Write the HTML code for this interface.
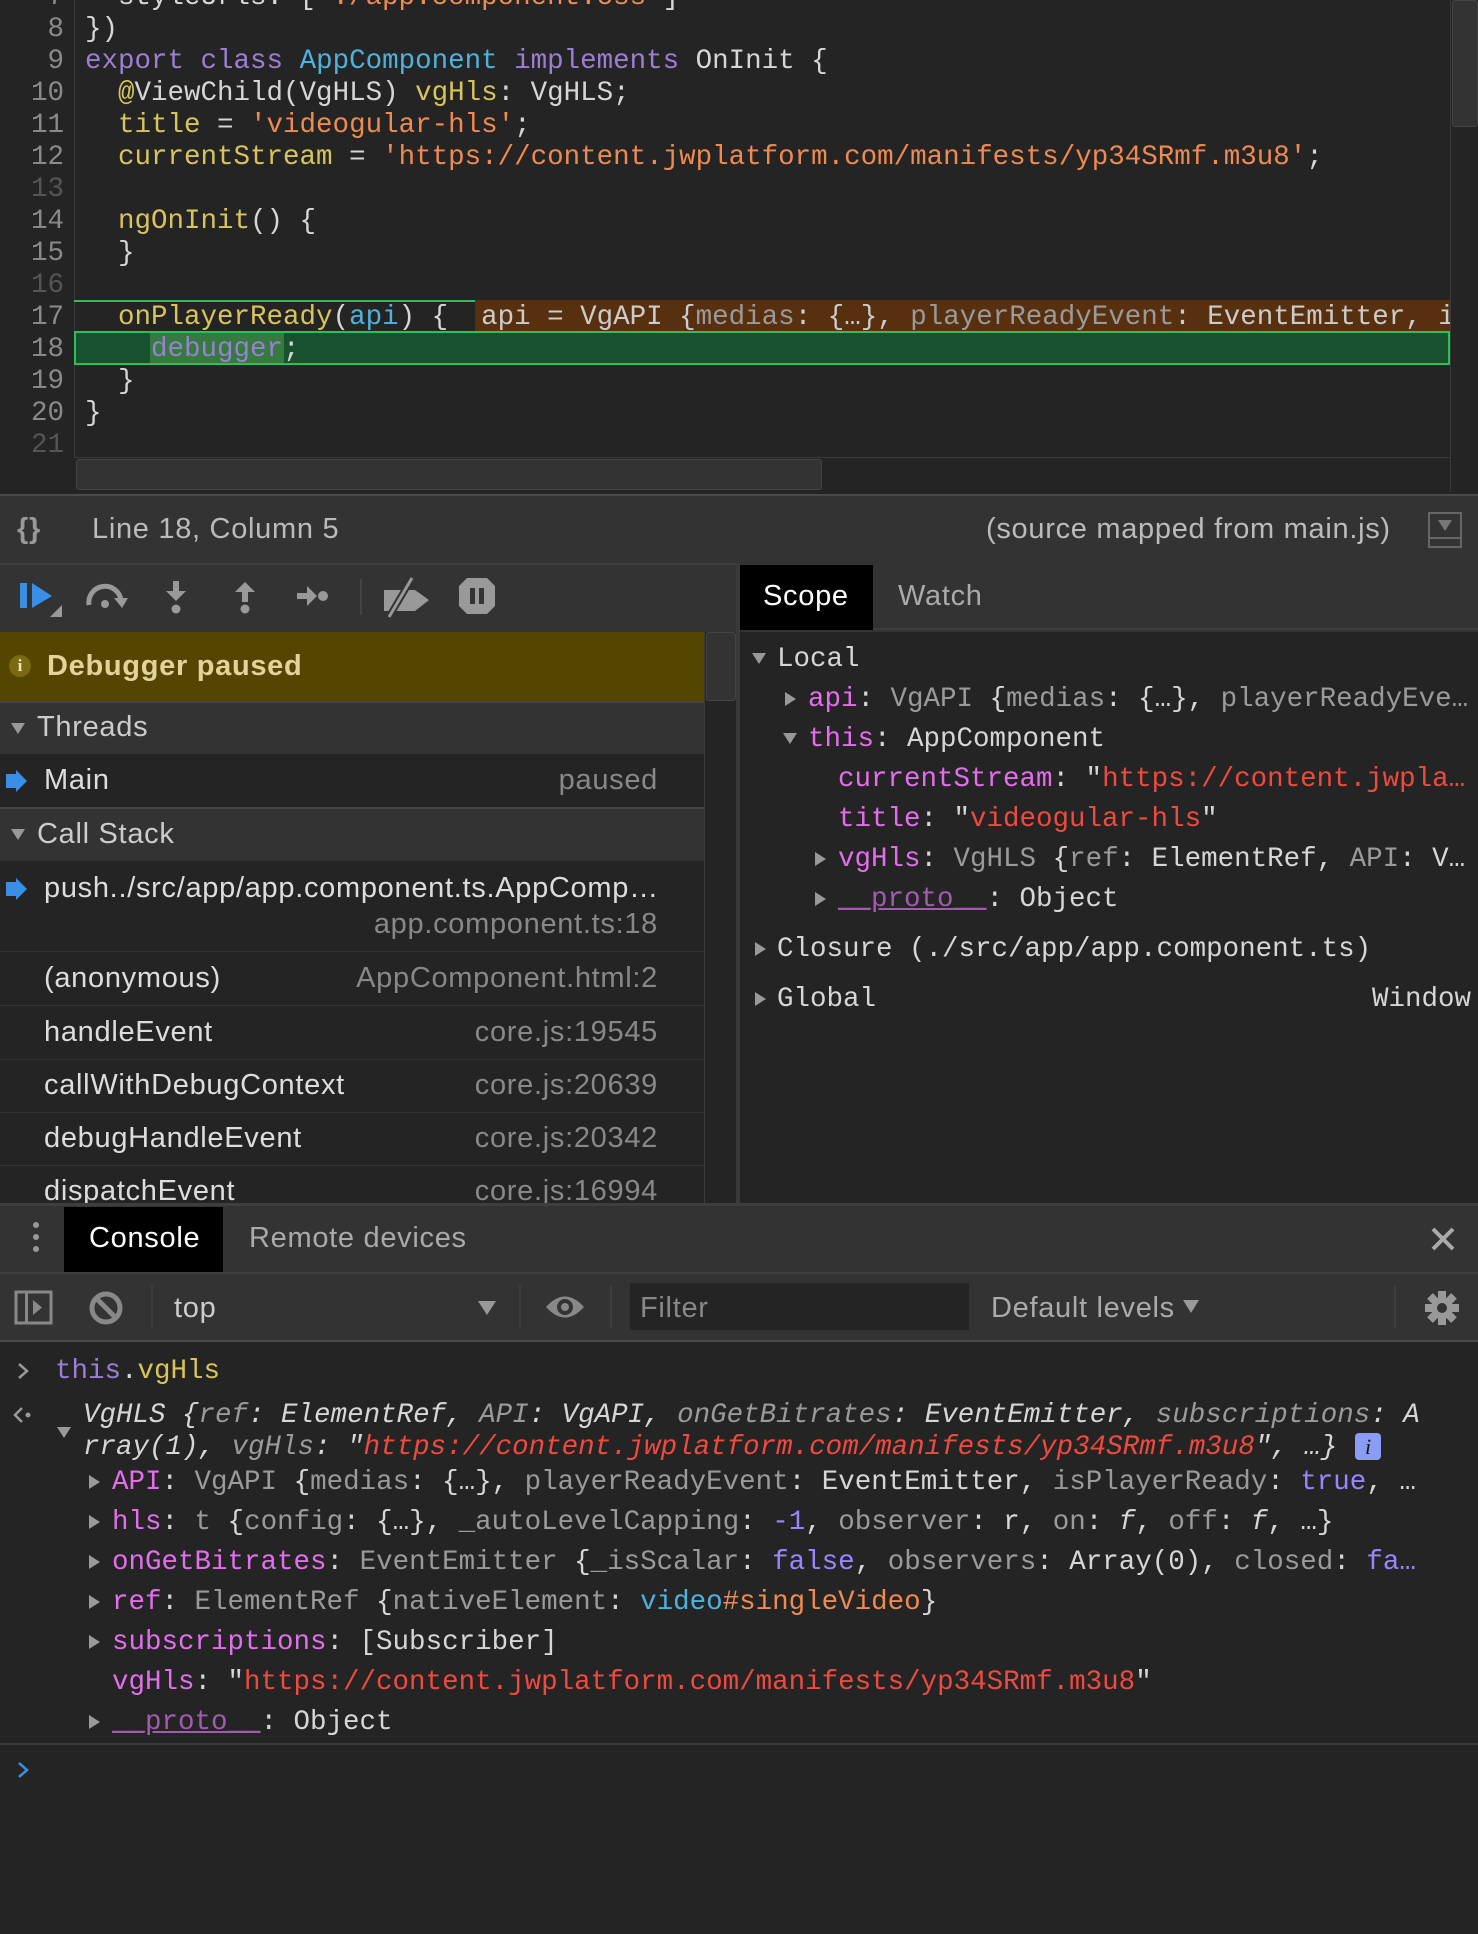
<!DOCTYPE html>
<html><head><meta charset="utf-8"><style>
*{margin:0;padding:0;box-sizing:border-box}
body{width:1478px;height:1934px;background:#242424;position:relative;overflow:hidden;font-family:"Liberation Sans",sans-serif;color:#d6d6d6}
.a{position:absolute;white-space:pre}
.m{font-family:"Liberation Mono",monospace;font-size:27.5px;line-height:32px;margin-top:3px}
.s{font-size:29px;line-height:32px;letter-spacing:0.7px}
.k{color:#9a7fd5}.b{color:#4eb2de}.y{color:#d8c55a}.o{color:#ef8a50}.w{color:#d6d6d6}
.g{color:#9a9a9a}.p{color:#e36eec}.r{color:#ee4a40}.v{color:#9b85ff}.pr{color:#a35bb0}
.ln{color:#8a8a8a;text-align:right;width:64px;left:0}
.dim{color:#555}
.tri{position:absolute;width:0;height:0}
.tr{border-top:7px solid transparent;border-bottom:7px solid transparent;border-left:11px solid #999}
.td{border-left:7px solid transparent;border-right:7px solid transparent;border-top:11px solid #999}
</style></head><body>

<!-- code editor -->
<div class="a" style="left:74px;top:0;width:1px;height:491px;background:#3a3a3a"></div>
<div class="a" style="left:74px;top:300px;width:1376px;height:2px;background:#2fbf58"></div>
<div class="a" style="left:475px;top:300px;width:1003px;height:31px;background:#573010"></div>
<div class="a" style="left:74px;top:331px;width:1376px;height:34px;background:#17512d;border:2px solid #2fbf58"></div>
<div class="a" style="left:150px;top:333px;width:134px;height:30px;background:#357a3e"></div>

<div class="a m ln" style="top:-21px">7</div>
<div class="a m" style="left:85px;top:-21px"><span class="w">  styleUrls: [</span><span class="o">'./app.component.css'</span><span class="w">]</span></div>
<div class="a m ln" style="top:11px">8</div><div class="a m w" style="left:85px;top:11px">})</div>
<div class="a m ln" style="top:43px">9</div><div class="a m" style="left:85px;top:43px"><span class="k">export class</span> <span class="b">AppComponent</span> <span class="k">implements</span> <span class="w">OnInit {</span></div>
<div class="a m ln" style="top:75px">10</div><div class="a m" style="left:85px;top:75px">  <span class="y">@</span><span class="w">ViewChild(VgHLS)</span> <span class="y">vgHls</span><span class="w">: VgHLS;</span></div>
<div class="a m ln" style="top:107px">11</div><div class="a m" style="left:85px;top:107px">  <span class="y">title</span><span class="w"> = </span><span class="o">'videogular-hls'</span><span class="w">;</span></div>
<div class="a m ln" style="top:139px">12</div><div class="a m" style="left:85px;top:139px">  <span class="y">currentStream</span><span class="w"> = </span><span class="o">'https://content.jwplatform.com/manifests/yp34SRmf.m3u8'</span><span class="w">;</span></div>
<div class="a m ln dim" style="top:171px">13</div>
<div class="a m ln" style="top:203px">14</div><div class="a m" style="left:85px;top:203px">  <span class="y">ngOnInit</span><span class="w">() {</span></div>
<div class="a m ln" style="top:235px">15</div><div class="a m w" style="left:85px;top:235px">  }</div>
<div class="a m ln dim" style="top:267px">16</div>
<div class="a m ln" style="top:299px">17</div><div class="a m" style="left:85px;top:299px">  <span class="y">onPlayerReady</span><span class="w">(</span><span class="b">api</span><span class="w">) {  </span><span style="color:#ccc">api = VgAPI {</span><span class="g">medias</span><span style="color:#ccc">: {…}, </span><span class="g">playerReadyEvent</span><span style="color:#ccc">: EventEmitter, is</span></div>
<div class="a m ln" style="top:331px">18</div><div class="a m" style="left:85px;top:331px">    <span class="k">debugger</span><span class="w">;</span></div>
<div class="a m ln" style="top:363px">19</div><div class="a m w" style="left:85px;top:363px">  }</div>
<div class="a m ln" style="top:395px">20</div><div class="a m w" style="left:85px;top:395px">}</div>
<div class="a m ln dim" style="top:427px">21</div>

<!-- scrollbars -->
<div class="a" style="left:74px;top:457px;width:1376px;height:34px;background:#242424;border-top:1px solid #3a3a3a"></div>
<div class="a" style="left:76px;top:459px;width:746px;height:31px;background:#333;border:1px solid #444;border-radius:3px"></div>
<div class="a" style="left:1450px;top:0;width:28px;height:491px;background:#242424;border-left:1px solid #3a3a3a"></div>
<div class="a" style="left:1452px;top:0;width:26px;height:127px;background:#333;border:1px solid #444;border-radius:3px"></div>

<!-- status bar -->
<div class="a" style="left:0;top:494px;width:1478px;height:69px;background:#333;border-top:2px solid #4a4a4a"></div>
<div class="a s" style="left:17px;top:513px;color:#999;font-weight:bold">{}</div>
<div class="a s" style="left:92px;top:513px;color:#bbb">Line 18, Column 5</div>
<div class="a s" style="left:986px;top:513px;color:#bbb">(source mapped from main.js)</div>
<div class="a" style="left:1428px;top:512px;width:34px;height:36px;border:2px solid #666"></div>
<div class="a" style="left:1428px;top:537px;width:34px;height:2px;background:#666"></div>
<div class="tri td" style="left:1438px;top:520px;border-top-color:#777"></div>

<!-- debugger toolbar -->
<div class="a" style="left:0;top:563px;width:1478px;height:69px;background:#333;border-top:2px solid #3e3e3e"></div>
<svg class="a" style="left:0;top:563px" width="740" height="69" viewBox="0 563 740 69">
<rect x="20" y="583" width="7" height="25" fill="#3b8ee6"/><path d="M32 583 L52 596 L32 608Z" fill="#3b8ee6"/><path d="M62 617 L62 605 L50 617Z" fill="#999"/>
<path d="M89 605 A16 16 0 0 1 121 600" stroke="#999" stroke-width="5" fill="none"/><path d="M114 598 L128 598 L122 608Z" fill="#999"/><circle cx="105" cy="604" r="4" fill="#999"/>
<rect x="173" y="581" width="6" height="12" fill="#999"/><path d="M166 591 L186 591 L176 601Z" fill="#999"/><circle cx="176" cy="609" r="4.5" fill="#999"/>
<rect x="242" y="590" width="6" height="12" fill="#999"/><path d="M235 592 L255 592 L245 582Z" fill="#999"/><circle cx="245" cy="609" r="4.5" fill="#999"/>
<rect x="297" y="593" width="12" height="6" fill="#999"/><path d="M307 586 L317 596 L307 606Z" fill="#999"/><circle cx="323" cy="596" r="5" fill="#999"/>
<rect x="360" y="579" width="2" height="36" fill="#444"/>
<path d="M384 590 L415 590 L429 600 L415 611 L384 611Z" fill="#999"/><path d="M389 617 L412 578" stroke="#333" stroke-width="7"/><path d="M389 617 L412 578" stroke="#999" stroke-width="3"/>
<path d="M467 578 L487 578 L495 586 L495 606 L487 614 L467 614 L459 606 L459 586Z" fill="#999"/><rect x="470" y="588" width="5" height="16" fill="#333"/><rect x="479" y="588" width="5" height="16" fill="#333"/>
</svg>

<!-- left pane -->
<div class="a" style="left:0;top:632px;width:704px;height:69px;background:#544500"></div>
<div class="a" style="left:9px;top:655px;width:22px;height:22px;border-radius:50%;background:#7a6a14;color:#f0e4a8;font:bold 17px 'Liberation Serif',serif;text-align:center;line-height:22px">i</div>
<div class="a s" style="left:47px;top:650px;color:#e0d49c;font-weight:bold">Debugger paused</div>
<div class="a" style="left:704px;top:632px;width:34px;height:571px;background:#242424;border-left:1px solid #3a3a3a"></div>
<div class="a" style="left:706px;top:632px;width:30px;height:69px;background:#333;border-radius:3px;border:1px solid #444"></div>
<div class="a" style="left:736px;top:563px;width:4px;height:640px;background:#3a3a3a"></div>

<div class="a" style="left:0;top:701px;width:704px;height:53px;background:#333;border-top:2px solid #444"></div>
<div class="tri td" style="left:11px;top:723px"></div>
<div class="a s" style="left:37px;top:711px;color:#ccc">Threads</div>
<div class="a" style="left:0;top:754px;width:704px;height:53px;background:#242424"></div>
<svg class="a" style="left:6px;top:770px" width="22" height="22"><path d="M0 4 L10 4 L10 0 L21 11 L10 22 L10 18 L0 18Z" fill="#3b8ee6"/></svg>
<div class="a s" style="left:44px;top:764px;color:#ddd">Main</div>
<div class="a s" style="left:400px;top:764px;width:258px;text-align:right;color:#888">paused</div>
<div class="a" style="left:0;top:807px;width:704px;height:54px;background:#333;border-top:2px solid #444"></div>
<div class="tri td" style="left:11px;top:829px"></div>
<div class="a s" style="left:37px;top:818px;color:#ccc">Call Stack</div>
<svg class="a" style="left:6px;top:878px" width="22" height="22"><path d="M0 4 L10 4 L10 0 L21 11 L10 22 L10 18 L0 18Z" fill="#3b8ee6"/></svg>
<div class="a s" style="left:44px;top:872px;color:#ddd">push../src/app/app.component.ts.AppComp…</div>
<div class="a s" style="left:300px;top:908px;width:358px;text-align:right;color:#888">app.component.ts:18</div>
<div class="a" style="left:0;top:951px;width:704px;height:1px;background:#333"></div>
<div class="a s" style="left:44px;top:962px;color:#ddd">(anonymous)</div><div class="a s" style="left:300px;top:962px;width:358px;text-align:right;color:#888">AppComponent.html:2</div>
<div class="a" style="left:0;top:1005px;width:704px;height:1px;background:#333"></div>
<div class="a s" style="left:44px;top:1016px;color:#ddd">handleEvent</div><div class="a s" style="left:300px;top:1016px;width:358px;text-align:right;color:#888">core.js:19545</div>
<div class="a" style="left:0;top:1059px;width:704px;height:1px;background:#333"></div>
<div class="a s" style="left:44px;top:1069px;color:#ddd">callWithDebugContext</div><div class="a s" style="left:300px;top:1069px;width:358px;text-align:right;color:#888">core.js:20639</div>
<div class="a" style="left:0;top:1112px;width:704px;height:1px;background:#333"></div>
<div class="a s" style="left:44px;top:1122px;color:#ddd">debugHandleEvent</div><div class="a s" style="left:300px;top:1122px;width:358px;text-align:right;color:#888">core.js:20342</div>
<div class="a" style="left:0;top:1165px;width:704px;height:1px;background:#333"></div>
<div class="a s" style="left:44px;top:1175px;color:#ddd">dispatchEvent</div><div class="a s" style="left:300px;top:1175px;width:358px;text-align:right;color:#888">core.js:16994</div>

<!-- right pane -->
<div class="a" style="left:740px;top:563px;width:738px;height:67px;background:#333;border-bottom:2px solid #3e3e3e"></div>
<div class="a" style="left:740px;top:565px;width:133px;height:65px;background:#000"></div>
<div class="a s" style="left:763px;top:580px;color:#fff">Scope</div>
<div class="a s" style="left:898px;top:580px;color:#aaa">Watch</div>
<div class="tri td" style="left:752px;top:653px"></div>
<div class="a m w" style="left:777px;top:641px">Local</div>
<div class="tri tr" style="left:785px;top:692px"></div>
<div class="a m" style="left:808px;top:681px"><span class="p">api</span><span class="w">: </span><span class="g">VgAPI </span><span class="w">{</span><span class="g">medias</span><span class="w">: {…}, </span><span class="g">playerReadyEve…</span></div>
<div class="tri td" style="left:783px;top:733px"></div>
<div class="a m" style="left:808px;top:721px"><span class="p">this</span><span class="w">: AppComponent</span></div>
<div class="a m" style="left:838px;top:761px"><span class="p">currentStream</span><span class="w">: "</span><span class="r">https://content.jwpla…</span></div>
<div class="a m" style="left:838px;top:801px"><span class="p">title</span><span class="w">: "</span><span class="r">videogular-hls</span><span class="w">"</span></div>
<div class="tri tr" style="left:815px;top:852px"></div>
<div class="a m" style="left:838px;top:841px"><span class="p">vgHls</span><span class="w">: </span><span class="g">VgHLS </span><span class="w">{</span><span class="g">ref</span><span class="w">: ElementRef, </span><span class="g">API</span><span class="w">: V…</span></div>
<div class="tri tr" style="left:815px;top:892px"></div>
<div class="a m" style="left:838px;top:881px"><span class="pr" style="text-decoration:underline">__proto__</span><span class="w">: Object</span></div>
<div class="tri tr" style="left:755px;top:942px"></div>
<div class="a m w" style="left:777px;top:931px">Closure (./src/app/app.component.ts)</div>
<div class="tri tr" style="left:755px;top:992px"></div>
<div class="a m w" style="left:777px;top:981px">Global</div>
<div class="a m w" style="left:1372px;top:981px">Window</div>

<!-- console drawer -->
<div class="a" style="left:0;top:1203px;width:1478px;height:69px;background:#333;border-top:3px solid #3e3e3e"></div>
<div class="a" style="left:33px;top:1222px;width:6px;height:6px;border-radius:50%;background:#999;box-shadow:0 12px 0 #999,0 24px 0 #999"></div>
<div class="a" style="left:64px;top:1207px;width:159px;height:65px;background:#000"></div>
<div class="a s" style="left:89px;top:1222px;color:#fff">Console</div>
<div class="a s" style="left:249px;top:1222px;color:#aaa">Remote devices</div>
<svg class="a" style="left:1430px;top:1226px" width="26" height="26"><path d="M3 3 L23 23 M23 3 L3 23" stroke="#aaa" stroke-width="4"/></svg>

<div class="a" style="left:0;top:1272px;width:1478px;height:70px;background:#333;border-top:2px solid #3e3e3e;border-bottom:2px solid #4a4a4a"></div>
<svg class="a" style="left:14px;top:1290px" width="40" height="36"><rect x="2" y="2" width="35" height="31" fill="none" stroke="#888" stroke-width="3"/><rect x="11" y="2" width="3" height="31" fill="#888"/><path d="M19 10 L28 17.5 L19 25Z" fill="#888"/></svg>
<svg class="a" style="left:88px;top:1290px" width="36" height="36"><circle cx="18" cy="18" r="14" fill="none" stroke="#888" stroke-width="5"/><path d="M8 8 L28 28" stroke="#888" stroke-width="5"/></svg>
<div class="a" style="left:151px;top:1286px;width:2px;height:42px;background:#3e3e3e"></div>
<div class="a s" style="left:174px;top:1292px;color:#ccc">top</div>
<div class="tri td" style="left:478px;top:1301px;border-left-width:9px;border-right-width:9px;border-top-width:14px"></div>
<div class="a" style="left:519px;top:1286px;width:2px;height:42px;background:#3e3e3e"></div>
<svg class="a" style="left:544px;top:1292px" width="42" height="30"><path d="M2 15 Q21 -6 40 15 Q21 36 2 15Z" fill="#888"/><circle cx="21" cy="15" r="8" fill="#333"/><circle cx="21" cy="15" r="4" fill="#888"/></svg>
<div class="a" style="left:610px;top:1286px;width:2px;height:42px;background:#3e3e3e"></div>
<div class="a" style="left:630px;top:1283px;width:339px;height:47px;background:#242424"></div>
<div class="a s" style="left:640px;top:1292px;color:#888">Filter</div>
<div class="a s" style="left:991px;top:1292px;color:#aaa">Default levels</div>
<div class="tri td" style="left:1183px;top:1300px;border-left-width:8px;border-right-width:8px;border-top-width:13px"></div>
<div class="a" style="left:1394px;top:1286px;width:2px;height:42px;background:#3e3e3e"></div>
<svg class="a" style="left:1424px;top:1290px" width="36" height="36" viewBox="0 0 36 36"><g fill="#999"><circle cx="18" cy="18" r="11"/><rect x="14" y="1" width="8" height="34"/><rect x="14" y="1" width="8" height="34" transform="rotate(45 18 18)"/><rect x="14" y="1" width="8" height="34" transform="rotate(90 18 18)"/><rect x="14" y="1" width="8" height="34" transform="rotate(135 18 18)"/></g><circle cx="18" cy="18" r="5" fill="#333"/></svg>

<!-- console output -->
<svg class="a" style="left:16px;top:1362px" width="16" height="18"><path d="M3 2 L11 9 L3 16" stroke="#999" stroke-width="2.5" fill="none"/></svg>
<div class="a m" style="left:55px;top:1353px"><span class="k">this</span><span class="w">.</span><span class="y">vgHls</span></div>
<svg class="a" style="left:12px;top:1406px" width="22" height="18"><path d="M10 2 L3 9 L10 16" stroke="#999" stroke-width="2.5" fill="none"/><circle cx="16" cy="9" r="2.5" fill="#999"/></svg>
<div class="tri td" style="left:57px;top:1427px"></div>
<div class="a m" style="left:83px;top:1397px;font-style:italic"><span class="w">VgHLS {</span><span class="g">ref</span><span class="w">: ElementRef, </span><span class="g">API</span><span class="w">: VgAPI, </span><span class="g">onGetBitrates</span><span class="w">: EventEmitter, </span><span class="g">subscriptions</span><span class="w">: A</span></div>
<div class="a m" style="left:83px;top:1429px;font-style:italic"><span class="w">rray(1), </span><span class="g">vgHls</span><span class="w">: "</span><span class="r">https://content.jwplatform.com/manifests/yp34SRmf.m3u8</span><span class="w">", …}</span></div>
<div class="a" style="left:1355px;top:1433px;width:26px;height:27px;background:#8a9cf5;border-radius:4px;color:#111;font:italic 22px 'Liberation Serif',serif;text-align:center;line-height:27px">i</div>
<div class="tri tr" style="left:89px;top:1475px"></div>
<div class="a m" style="left:112px;top:1464px"><span class="p">API</span><span class="w">: </span><span class="g">VgAPI </span><span class="w">{</span><span class="g">medias</span><span class="w">: {…}, </span><span class="g">playerReadyEvent</span><span class="w">: EventEmitter, </span><span class="g">isPlayerReady</span><span class="w">: </span><span class="v">true</span><span class="w">, …</span></div>
<div class="tri tr" style="left:89px;top:1515px"></div>
<div class="a m" style="left:112px;top:1504px"><span class="p">hls</span><span class="w">: </span><span class="g">t </span><span class="w">{</span><span class="g">config</span><span class="w">: {…}, </span><span class="g">_autoLevelCapping</span><span class="w">: </span><span class="v">-1</span><span class="w">, </span><span class="g">observer</span><span class="w">: r, </span><span class="g">on</span><span class="w">: <i>f</i>, </span><span class="g">off</span><span class="w">: <i>f</i>, …}</span></div>
<div class="tri tr" style="left:89px;top:1555px"></div>
<div class="a m" style="left:112px;top:1544px"><span class="p">onGetBitrates</span><span class="w">: </span><span class="g">EventEmitter </span><span class="w">{</span><span class="g">_isScalar</span><span class="w">: </span><span class="v">false</span><span class="w">, </span><span class="g">observers</span><span class="w">: Array(0), </span><span class="g">closed</span><span class="w">: </span><span class="v">fa…</span></div>
<div class="tri tr" style="left:89px;top:1595px"></div>
<div class="a m" style="left:112px;top:1584px"><span class="p">ref</span><span class="w">: </span><span class="g">ElementRef </span><span class="w">{</span><span class="g">nativeElement</span><span class="w">: </span><span class="b">video</span><span class="o">#singleVideo</span><span class="w">}</span></div>
<div class="tri tr" style="left:89px;top:1635px"></div>
<div class="a m" style="left:112px;top:1624px"><span class="p">subscriptions</span><span class="w">: [Subscriber]</span></div>
<div class="a m" style="left:112px;top:1664px"><span class="p">vgHls</span><span class="w">: "</span><span class="r">https://content.jwplatform.com/manifests/yp34SRmf.m3u8</span><span class="w">"</span></div>
<div class="tri tr" style="left:89px;top:1715px"></div>
<div class="a m" style="left:112px;top:1704px"><span class="pr" style="text-decoration:underline">__proto__</span><span class="w">: Object</span></div>
<div class="a" style="left:0;top:1743px;width:1478px;height:2px;background:#3a3a3a"></div>
<svg class="a" style="left:16px;top:1761px" width="16" height="18"><path d="M3 2 L11 9 L3 16" stroke="#3b8ee6" stroke-width="2.5" fill="none"/></svg>
</body></html>
